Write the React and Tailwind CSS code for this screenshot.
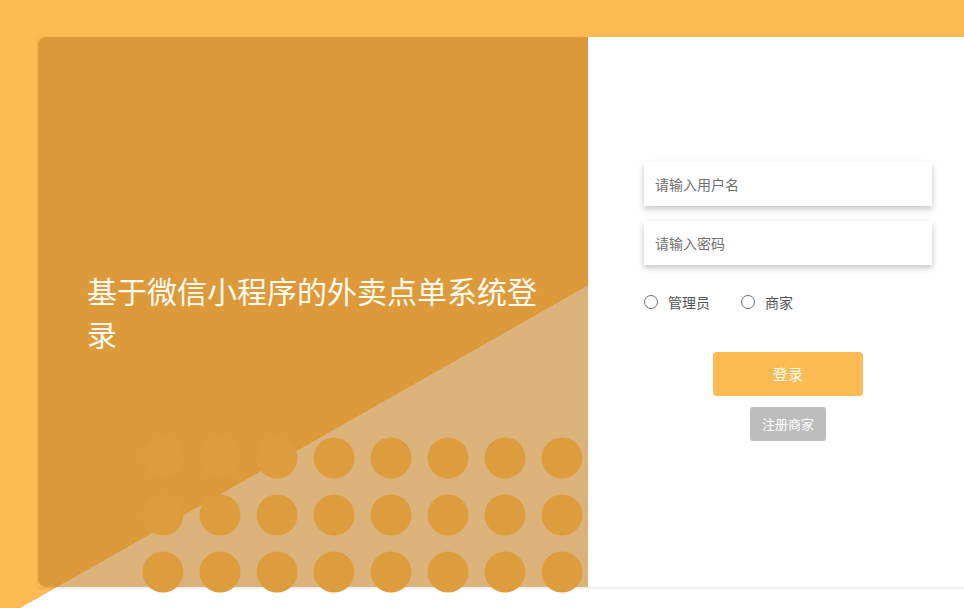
import React from 'react';

const cols = [125, 182, 239, 296, 353, 410, 467, 524];
const rows = [421, 478, 535];

function Dots() {
  return (
    <svg
      className="absolute left-0 top-0 overflow-visible pointer-events-none"
      width="550"
      height="550"
      viewBox="0 0 550 550"
    >
      {rows.map((cy) =>
        cols.map((cx) => (
          <circle key={`${cx}-${cy}`} cx={cx} cy={cy} r="20.5" fill="#de9d3c" />
        ))
      )}
    </svg>
  );
}

function Radio({ label, className }) {
  return (
    <label className={`flex items-center gap-[10px] cursor-pointer ${className || ''}`}>
      <span className="w-[14px] h-[14px] rounded-full border border-[#6e6e6e] bg-white" />
      <span className="text-[14px] text-[#555]">{label}</span>
    </label>
  );
}

function App() {
  return (
    <div className="w-full h-[608px] overflow-hidden bg-[linear-gradient(150.4deg,#ffbb53_53.6%,#ffffff_53.6%)] font-['Noto_Sans_CJK_SC','Noto_Sans',sans-serif]">
      <div className="flex mt-[37px] ml-[38px] w-[950px] h-[550px] shadow-[0_1px_3px_rgba(0,0,0,0.12)]">
        {/* 左侧标题区 */}
        <div className="relative w-[550px] rounded-l-lg bg-[#c7872ca1] flex items-center pl-[49px]">
          <Dots />
          <h1 className="relative w-[460px] text-[30px] leading-[43px] text-[#fffaf2] font-normal">
            基于微信小程序的外卖点单系统登录
          </h1>
        </div>

        {/* 右侧登录表单 */}
        <div className="w-[400px] bg-[#fefefe] flex flex-col items-center pt-[125px]">
          <input
            type="text"
            placeholder="请输入用户名"
            className="w-[288px] h-[44px] px-[11px] text-[14px] bg-white outline-none placeholder:text-[#707070] shadow-[0_3px_6px_rgba(0,0,0,0.22)]"
          />
          <input
            type="password"
            placeholder="请输入密码"
            className="mt-[15px] w-[288px] h-[44px] px-[11px] text-[14px] bg-white outline-none placeholder:text-[#707070] shadow-[0_3px_6px_rgba(0,0,0,0.22)]"
          />
          <div className="mt-[27px] w-[288px] h-[20px] flex items-center">
            <Radio label="管理员" />
            <Radio label="商家" className="ml-[31px]" />
          </div>
          <button className="mt-[40px] w-[150px] h-[44px] rounded-[4px] bg-[#ffbb53] text-white text-[15px]">
            登录
          </button>
          <button className="mt-[11px] w-[76px] h-[34px] rounded-[3px] bg-[#bdbdbd] text-white text-[13px]">
            注册商家
          </button>
        </div>
      </div>
    </div>
  );
}

export default App;
